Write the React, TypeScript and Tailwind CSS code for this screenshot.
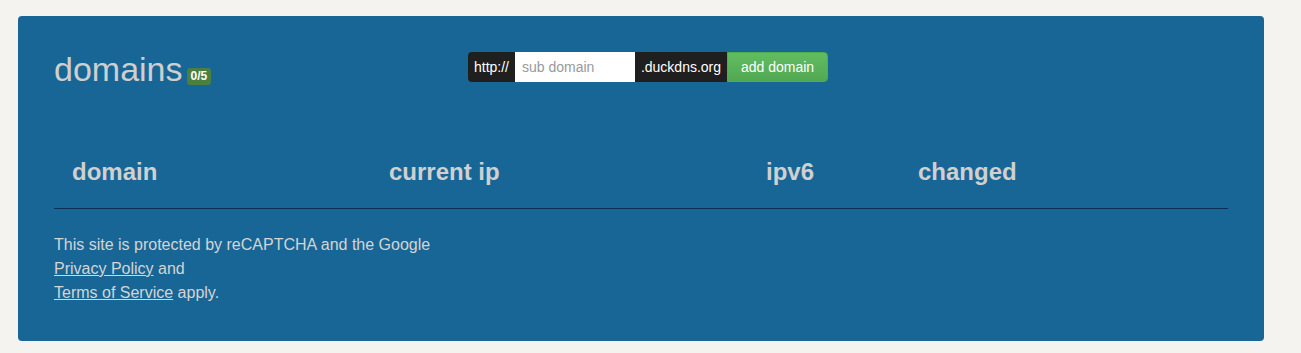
export default function App() {
  const cols = [
    { label: "domain", w: "w-[317px]" },
    { label: "current ip", w: "w-[377px]" },
    { label: "ipv6", w: "w-[152px]" },
    { label: "changed", w: "" },
  ];

  return (
    <div className="min-h-screen bg-[#f4f3ef] pl-[18px] pr-[37px] pt-[16px] font-['Liberation_Sans',Arial,sans-serif]">
      <div className="h-[325px] rounded-[4px] bg-[#186696] px-[36px] pt-[36px]">
        {/* Header */}
        <div className="flex h-[84px] items-start">
          <div className="flex w-[414px] items-start">
            <h1 className="text-[34px] leading-[34px] text-[#cfcfcf]">domains</h1>
            <span className="ml-[4px] mt-[16px] rounded-[3px] bg-[#4a7f3f] px-[4px] text-[12px] font-bold leading-[17px] text-white">
              0/5
            </span>
          </div>

          <div className="flex h-[30px] text-[14px]">
            <span className="flex w-[47px] items-center justify-center rounded-l-[4px] bg-[#1f1f1f] text-white">http://</span>
            <input
              placeholder="sub domain"
              className="w-[120px] bg-white px-[7px] text-[14px] text-[#333] outline-none placeholder:text-[#999]"
            />
            <span className="flex w-[92px] items-center justify-center bg-[#1f1f1f] text-white">.duckdns.org</span>
            <button className="w-[101px] rounded-r-[4px] border border-[#4cae4c] bg-gradient-to-b from-[#62bd62] to-[#51a851] text-white">
              add domain
            </button>
          </div>
        </div>

        {/* Table */}
        <table className="w-full border-collapse">
          <thead>
            <tr className="border-b border-[#0e2f55]">
              {cols.map((c) => (
                <th
                  key={c.label}
                  className={`${c.w} h-[72px] px-[18px] text-left text-[24px] font-bold text-[#d0d0d0]`}
                >
                  {c.label}
                </th>
              ))}
            </tr>
          </thead>
        </table>

        {/* reCAPTCHA notice */}
        <p className="mt-[24px] text-[16px] leading-[24px] text-[#d4d4d4]">
          This site is protected by reCAPTCHA and the Google
          <br />
          <a className="underline">Privacy Policy</a> and
          <br />
          <a className="underline">Terms of Service</a> apply.
        </p>
      </div>
    </div>
  );
}
